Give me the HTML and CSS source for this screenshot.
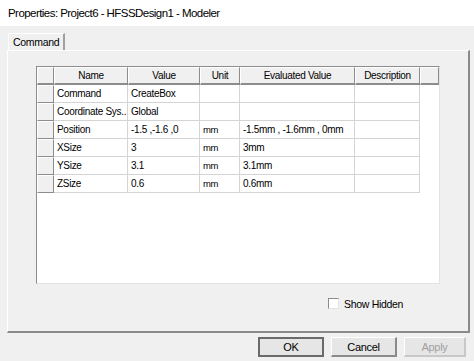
FILE: index.html
```html
<!DOCTYPE html>
<html lang="en" dir="ltr">
  <head>
    <meta charset="utf-8">
    <title>Properties: Project6 - HFSSDesign1 - Modeler</title>
    <link rel="stylesheet" href="styles.css">
  </head>
  <body>
    <div class="titlebar">Properties: Project6 - HFSSDesign1 - Modeler</div>

    <div class="tabs">
      <div class="tab">Command</div>
    </div>

    <div class="panel">
      <div class="grid">
        <div class="hcell"></div>
        <div class="hcell">Name</div>
        <div class="hcell">Value</div>
        <div class="hcell">Unit</div>
        <div class="hcell">Evaluated Value</div>
        <div class="hcell">Description</div>
        <div class="hcell"></div>

        <div class="rowhead"></div>
        <div class="cell">Command</div>
        <div class="cell">CreateBox</div>
        <div class="cell"></div>
        <div class="cell"></div>
        <div class="cell"></div>
        <div class="blank"></div>

        <div class="rowhead"></div>
        <div class="cell">Coordinate Sys...</div>
        <div class="cell">Global</div>
        <div class="cell"></div>
        <div class="cell"></div>
        <div class="cell"></div>
        <div class="blank"></div>

        <div class="rowhead"></div>
        <div class="cell">Position</div>
        <div class="cell">-1.5 ,-1.6 ,0</div>
        <div class="cell small">mm</div>
        <div class="cell">-1.5mm , -1.6mm , 0mm</div>
        <div class="cell"></div>
        <div class="blank"></div>

        <div class="rowhead"></div>
        <div class="cell">XSize</div>
        <div class="cell">3</div>
        <div class="cell small">mm</div>
        <div class="cell">3mm</div>
        <div class="cell"></div>
        <div class="blank"></div>

        <div class="rowhead"></div>
        <div class="cell">YSize</div>
        <div class="cell">3.1</div>
        <div class="cell small">mm</div>
        <div class="cell">3.1mm</div>
        <div class="cell"></div>
        <div class="blank"></div>

        <div class="rowhead"></div>
        <div class="cell">ZSize</div>
        <div class="cell">0.6</div>
        <div class="cell small">mm</div>
        <div class="cell">0.6mm</div>
        <div class="cell"></div>
        <div class="blank"></div>
      </div>

      <label class="showhidden">
        <span class="checkbox"></span>
        Show Hidden
      </label>
    </div>

    <div class="buttons">
      <button class="btn default">OK</button>
      <button class="btn">Cancel</button>
      <button class="btn" disabled>Apply</button>
    </div>
  </body>
</html>
```

FILE: styles.css
```css
html {
  font-family: "Liberation Sans", Arial, sans-serif;
  font-size: 10px;
  letter-spacing: -0.3px;
}

body {
  margin: 0;
  width: 474px;
  height: 361px;
  overflow: hidden;
  background: #f0f0f0;
  color: #000;
}

.titlebar {
  height: 26px;
  line-height: 26px;
  padding-left: 8px;
  background: #fff;
  font-size: 11.5px;
  letter-spacing: -0.55px;
}

.tabs {
  display: flex;
  padding-left: 8px;
  padding-top: 7px;
}

.tab {
  height: 17px;
  line-height: 16px;
  padding: 0 4px 0 4px;
  font-size: 10.5px;
  border-top: 1px solid #fff;
  border-left: 1px solid #fff;
  border-right: 2px solid #a0a0a0;
  box-sizing: border-box;
}

.panel {
  margin-left: 7px;
  width: 463px;
  height: 283px;
  box-sizing: border-box;
  border-top: 1px solid #fff;
  border-left: 1px solid #fff;
  border-right: 2px solid #8a8a8a;
  border-bottom: 2px solid #8a8a8a;
  padding-top: 15px;
}

.grid {
  margin-left: 28px;
  width: 404px;
  height: 218px;
  box-sizing: border-box;
  background: #fff;
  border-top: 1px solid #8c8c8c;
  border-left: 1px solid #8c8c8c;
  border-right: 1px solid #e3e3e3;
  border-bottom: 1px solid #e3e3e3;
  display: grid;
  grid-template-columns: 17px 74px 72px 40px 115px 65px 19px;
  grid-auto-rows: 18px;
  align-content: start;
}

.hcell,
.rowhead {
  background: #f0f0f0;
  border-top: 1px solid #fff;
  border-left: 1px solid #fff;
  border-right: 1px solid #8c8c8c;
  border-bottom: 1px solid #8c8c8c;
  box-sizing: border-box;
}

.hcell {
  text-align: center;
  line-height: 16px;
  border-bottom: 2px solid #8c8c8c;
}

.cell {
  border-right: 1px solid #d4d4d4;
  border-bottom: 1px solid #d4d4d4;
  box-sizing: border-box;
  padding-left: 3px;
  line-height: 18px;
  white-space: nowrap;
  overflow: hidden;
}

.cell.small {
  font-size: 9.5px;
}

.showhidden {
  display: flex;
  align-items: center;
  gap: 5px;
  margin: 13px 0 0 320px;
  height: 13px;
  font-size: 10.5px;
}

.checkbox {
  width: 11px;
  height: 11px;
  background: #fff;
  border-top: 1px solid #8c8c8c;
  border-left: 1px solid #8c8c8c;
  border-right: 1px solid #e3e3e3;
  border-bottom: 1px solid #e3e3e3;
  box-sizing: border-box;
}

.buttons {
  display: flex;
  gap: 7px;
  padding: 4px 0 0 258px;
}

.btn {
  font-family: inherit;
  font-size: 11px;
  letter-spacing: -0.3px;
  width: 66px;
  height: 20px;
  padding: 0;
  background: #e6e6e6;
  color: #000;
  border-top: 1px solid #fff;
  border-left: 1px solid #fff;
  border-right: 2px solid #8a8a8a;
  border-bottom: 2px solid #8a8a8a;
}

.btn.default {
  border: 2px solid #6a6a6a;
}

.btn:disabled {
  color: #a0a0a0;
  width: 62px;
  border-right-color: #c8c8c8;
  border-bottom-color: #c8c8c8;
}
```
